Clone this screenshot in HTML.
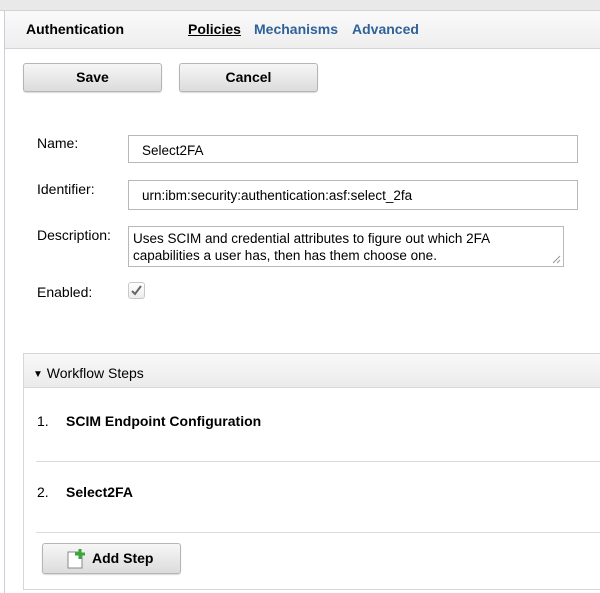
<!DOCTYPE html>
<html><head><style>
body{margin:0;width:600px;height:593px;overflow:hidden;background:#fff;font-family:"Liberation Sans",Arial,sans-serif;font-size:14px;color:#000;position:relative}
.abs{position:absolute}
.btn{position:absolute;border:1px solid #b5b5b5;border-radius:3px;background:linear-gradient(#f6f6f6,#dcdcdc);font-weight:bold;font-size:14px;text-align:center;box-shadow:0 1px 1px rgba(0,0,0,.15);box-sizing:border-box}
.inp{position:absolute;border:1px solid #b8b8b8;box-sizing:border-box;font-size:13.5px;background:#fff}
.lbl{position:absolute;left:37px;font-size:14px}
</style></head><body>
<div class="abs" style="left:0;top:0;width:600px;height:10px;background:#e9e9e9;border-bottom:1px solid #cfd3da"></div>
<div class="abs" style="left:4px;top:11px;width:1px;height:582px;background:#c9cfd8"></div>
<div class="abs" style="left:5px;top:11px;width:595px;height:37px;background:linear-gradient(#fafafa,#eeeeee);border-bottom:1px solid #d4d4d4"></div>
<div class="abs" style="left:26px;top:21px;font-weight:bold;font-size:14px">Authentication</div>
<div class="abs" style="left:188px;top:21px;font-weight:bold;font-size:14px;text-decoration:underline">Policies</div>
<div class="abs" style="left:254px;top:21px;font-weight:bold;font-size:14px;color:#2e6299">Mechanisms</div>
<div class="abs" style="left:352px;top:21px;font-weight:bold;font-size:14px;color:#2e6299">Advanced</div>
<div class="btn" style="left:23px;top:63px;width:139px;height:29px;line-height:27px">Save</div>
<div class="btn" style="left:179px;top:63px;width:139px;height:29px;line-height:27px">Cancel</div>
<div class="lbl" style="top:135px">Name:</div>
<div class="inp" style="left:128px;top:135px;width:450px;height:28px;padding:7px 0 0 13px">Select2FA</div>
<div class="lbl" style="top:181px">Identifier:</div>
<div class="inp" style="left:128px;top:180px;width:450px;height:30px;padding:7px 0 0 13px">urn:ibm:security:authentication:asf:select_2fa</div>
<div class="lbl" style="top:227px">Description:</div>
<div class="inp" style="left:128px;top:226px;width:436px;height:41px;padding:3px 60px 0 4px;line-height:17px">Uses SCIM and credential attributes to figure out which 2FA capabilities a user has, then has them choose one.</div>
<svg class="abs" style="left:551px;top:254px" width="10" height="10"><path d="M2 9L9 2M6 9L9 6" stroke="#999"/></svg>
<div class="lbl" style="top:284px">Enabled:</div>
<div class="abs" style="left:128px;top:282px;width:17px;height:17px;border:1px solid #c8c8c8;border-radius:3px;background:linear-gradient(#fff,#ececec);box-sizing:border-box"><svg width="15" height="15" viewBox="0 0 15 15"><path d="M3 8l3 3 6-8" stroke="#666" stroke-width="2" fill="none"/></svg></div>
<div class="abs" style="left:23px;top:353px;width:580px;height:237px;border:1px solid #d6d6d6;box-sizing:border-box"></div>
<div class="abs" style="left:24px;top:354px;width:576px;height:33px;background:linear-gradient(#f8f8f8,#ebebeb);border-bottom:1px solid #d8d8d8"></div>
<div class="abs" style="left:33px;top:365px;font-size:14px"><span style="font-size:10px;position:relative;top:-1px">▼</span> Workflow Steps</div>
<div class="abs" style="left:37px;top:413px;font-size:14px">1.</div>
<div class="abs" style="left:66px;top:413px;font-size:14px;font-weight:bold">SCIM Endpoint Configuration</div>
<div class="abs" style="left:36px;top:461px;width:564px;height:1px;background:#dcdcdc"></div>
<div class="abs" style="left:37px;top:484px;font-size:14px">2.</div>
<div class="abs" style="left:66px;top:484px;font-size:14px;font-weight:bold">Select2FA</div>
<div class="abs" style="left:36px;top:532px;width:564px;height:1px;background:#dcdcdc"></div>
<div class="btn" style="left:42px;top:543px;width:139px;height:31px;line-height:29px;text-align:left;padding-left:49px">Add Step</div>
<svg class="abs" style="left:66px;top:548px" width="22" height="22" viewBox="0 0 22 22"><path d="M2 4h10l4 4v12H2z" fill="#fff" stroke="#888"/><path d="M14 1v10M9 6h10" stroke="#3aa63a" stroke-width="3"/></svg>
</body></html>
